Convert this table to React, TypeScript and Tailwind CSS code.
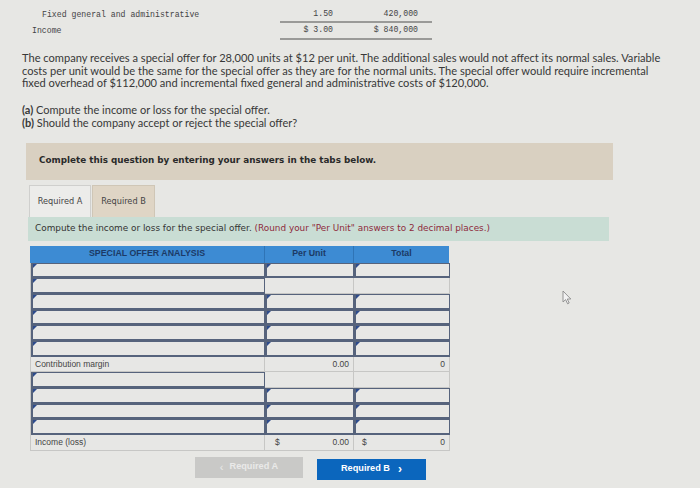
import React from "react";

const mono = { fontFamily: '"Liberation Mono", "DejaVu Sans Mono", monospace' };
const body = { fontFamily: 'Lato, "Open Sans", sans-serif' };
const verd = { fontFamily: '"DejaVu Sans", Verdana, sans-serif' };
const arial = { fontFamily: '"Liberation Sans", Arial, sans-serif' };

const Input = () => (
  <div className="relative h-full bg-[#e7e7e5] border border-[#56637c] border-l-2 border-b-2">
    <span className="absolute left-0 top-0 w-0 h-0 border-l-[4px] border-l-[#2d4b8c] border-b-[4px] border-b-transparent" />
  </div>
);

const Plain = ({ children, right }: { children?: React.ReactNode; right?: boolean }) => (
  <div
    className={
      "h-full bg-[#e7e7e5] border-r border-b border-[#c7c7c5] flex items-center px-[4px] text-[8.5px] text-[#444] " +
      (right ? "justify-end" : "")
    }
  >
    {children}
  </div>
);

type Row = { kind: "all" | "first" | "cm" | "income" };

const rows: Row[] = [
  { kind: "all" },
  { kind: "first" },
  { kind: "all" },
  { kind: "all" },
  { kind: "all" },
  { kind: "all" },
  { kind: "cm" },
  { kind: "first" },
  { kind: "all" },
  { kind: "all" },
  { kind: "all" },
  { kind: "income" },
];

const App = () => {
  return (
    <div className="relative w-[700px] h-[488px] overflow-hidden bg-[#e7e7e4] text-[#333]">
      {/* top figures */}
      <div className="pt-[7px] text-[8.2px] text-[#444]" style={mono}>
        <div className="flex h-[16px] items-center">
          <div className="w-[280px] pl-[42px]">Fixed general and administrative</div>
          <div className="w-[60px] h-full flex items-center justify-end pr-[7px] border-b-2 border-[#9a9a98]">1.50</div>
          <div className="w-[92px] h-full flex items-center justify-end pr-[14px] border-b-2 border-[#9a9a98]">420,000</div>
        </div>
        <div className="flex h-[17px] items-center">
          <div className="w-[280px] pl-[32px]">Income</div>
          <div className="w-[60px] h-full flex items-center justify-end pr-[7px] border-b-2 border-[#9a9a98]">$ 3.00</div>
          <div className="w-[92px] h-full flex items-center justify-end pr-[14px] border-b-2 border-[#9a9a98]">$ 840,000</div>
        </div>
      </div>

      <p className="mt-[12px] pl-[22px] text-[11.1px] leading-[12.5px] text-[#383838] whitespace-nowrap" style={body}>
        The company receives a special offer for 28,000 units at $12 per unit. The additional sales would not affect its normal sales. Variable
        <br />
        costs per unit would be the same for the special offer as they are for the normal units. The special offer would require incremental
        <br />
        fixed overhead of $112,000 and incremental fixed general and administrative costs of $120,000.
      </p>

      <div className="mt-[13px] pl-[22px] text-[11px] leading-[13px] text-[#383838]" style={body}>
        <div><span className="font-bold">(a)</span> Compute the income or loss for the special offer.</div>
        <div><span className="font-bold">(b)</span> Should the company accept or reject the special offer?</div>
      </div>

      <div className="mt-[14px] ml-[26px] w-[587px] h-[37px] bg-[#d9d0c1] flex items-center pl-[13px] text-[8.8px] font-bold text-[#2a2a2a]" style={verd}>
        Complete this question by entering your answers in the tabs below.
      </div>

      <div className="mt-[5px] ml-[29px] flex h-[32px] text-[8.2px] text-[#444]" style={verd}>
        <div className="w-[62px] bg-[#ececea] border border-b-0 border-[#cfcfcd] flex items-center justify-center">Required A</div>
        <div className="ml-[1px] w-[63px] bg-[#dfd5c5] border border-b-0 border-[#cfc6b6] flex items-center justify-center">Required B</div>
      </div>

      <div className="ml-[28px] w-[581px] h-[24px] bg-[#c9ddd4] flex items-center pl-[7px] text-[8.9px] text-[#333] whitespace-nowrap" style={verd}>
        Compute the income or loss for the special offer.&nbsp;
        <span className="text-[#8e2b3c]">(Round your "Per Unit" answers to 2 decimal places.)</span>
      </div>

      <div className="mt-[5px] ml-[30px] w-[419px]" style={arial}>
        <div className="grid grid-cols-[234px_89px_96px] h-[17px] bg-[#3d8bd3] text-[8.8px] font-bold text-[#1c3a66]">
          <div className="flex items-center justify-center">SPECIAL OFFER ANALYSIS</div>
          <div className="flex items-center justify-center border-l border-[#2f74b6]">Per Unit</div>
          <div className="flex items-center justify-center border-l border-[#2f74b6]">Total</div>
        </div>
        {rows.map((r, i) => (
          <div key={i} className="grid grid-cols-[234px_89px_96px] h-[15.7px] border-l border-[#c7c7c5]">
            {r.kind === "all" && (
              <>
                <Input />
                <Input />
                <Input />
              </>
            )}
            {r.kind === "first" && (
              <>
                <Input />
                <Plain />
                <Plain />
              </>
            )}
            {r.kind === "cm" && (
              <>
                <Plain>Contribution margin</Plain>
                <Plain right>0.00</Plain>
                <Plain right>0</Plain>
              </>
            )}
            {r.kind === "income" && (
              <>
                <Plain>Income (loss)</Plain>
                <Plain>
                  <span className="pl-[6px]">$</span>
                  <span className="ml-auto">0.00</span>
                </Plain>
                <Plain>
                  <span className="pl-[4px]">$</span>
                  <span className="ml-auto">0</span>
                </Plain>
              </>
            )}
          </div>
        ))}
      </div>

      <div className="mt-[6px] ml-[195px] flex items-start gap-[14px] text-[9.2px] font-bold" style={arial}>
        <div className="w-[108px] h-[21px] bg-[#c9c9c7] text-[#e9e9e9] flex items-center justify-center gap-[6px]">
          <span className="text-[11px] font-normal">‹</span>
          <span>Required A</span>
        </div>
        <div className="mt-[2px] w-[109px] h-[21px] bg-[#0b66bd] text-white flex items-center justify-center gap-[8px]">
          <span>Required B</span>
          <span className="text-[12px]">›</span>
        </div>
      </div>

      {/* mouse pointer */}
      <svg className="absolute left-[562px] top-[290px]" width="10" height="15" viewBox="0 0 10 15">
        <path d="M1 1 L1 12 L3.6 9.6 L5.6 13.8 L7.2 13 L5.3 9 L8.8 9 Z" fill="#f2f2f2" stroke="#8a8a8a" strokeWidth="0.9" />
      </svg>
    </div>
  );
};

export default App;
